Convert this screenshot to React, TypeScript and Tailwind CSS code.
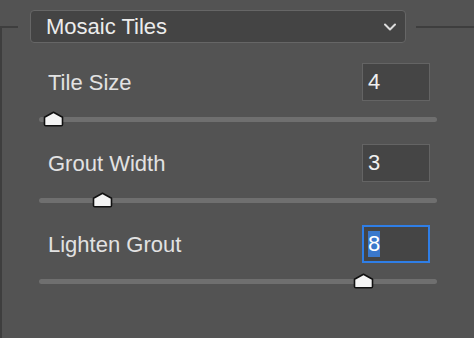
import React from 'react';

type Row = {
  label: string;
  value: string;
  // thumb centre, px from the track's left edge
  thumb: number;
  focused?: boolean;
};

const rows: Row[] = [
  { label: 'Tile Size', value: '4', thumb: 14.5 },
  { label: 'Grout Width', value: '3', thumb: 63 },
  { label: 'Lighten Grout', value: '8', thumb: 324.5, focused: true },
];

function Thumb({ left }: { left: number }) {
  return (
    <svg
      width="21"
      height="16"
      viewBox="0 0 21 16"
      className="absolute top-[-6px]"
      style={{ left: left - 10.5 }}
    >
      <path
        d="M1.5 6.2 L10.5 1.2 L19.5 6.2 V13.5 Q19.5 14.8 18.2 14.8 H2.8 Q1.5 14.8 1.5 13.5 Z"
        fill="#f4f4f4"
        stroke="#111"
        strokeWidth="1.6"
        strokeLinejoin="round"
      />
    </svg>
  );
}

function SliderRow({ row }: { row: Row }) {
  return (
    <div className="flex flex-col">
      <div className="flex items-center justify-between pl-[46px] pr-[44px]">
        <span className="text-[22px] text-[#e2e2e2]">{row.label}</span>
        {row.focused ? (
          <div className="flex h-[38px] w-[68px] items-center border-2 border-[#2f7ee6] bg-[#454545] pl-[4px]">
            <span className="bg-[#3a78cc] text-[22px] leading-[26px] text-white">
              {row.value}
            </span>
          </div>
        ) : (
          <div className="flex h-[38px] w-[68px] items-center border border-[#646464] bg-[#454545] pl-[5px]">
            <span className="text-[22px] leading-[26px] text-[#f0f0f0]">
              {row.value}
            </span>
          </div>
        )}
      </div>
      <div className="px-[37px] pt-[16px]">
        <div className="relative h-[5px] rounded-full bg-[#6f6f6f]">
          <Thumb left={row.thumb} />
        </div>
      </div>
    </div>
  );
}

export default function App() {
  return (
    <div
      className="h-[338px] w-[474px] overflow-hidden bg-[#535353] pt-[10px]"
      style={{ fontFamily: '"Liberation Sans", Arial, sans-serif' }}
    >
      <fieldset className="h-[400px] border-l-2 border-t-2 border-[#3e3e3e]">
        <legend className="ml-[16px] pl-[12px] pr-[10px]">
          <div className="flex h-[33px] w-[376px] items-center justify-between rounded-[4px] border border-[#666666] bg-[#444444] pl-[15px] pr-[9px]">
            <span className="text-[22px] text-[#ececec]">Mosaic Tiles</span>
            <svg width="12" height="8" viewBox="0 0 12 8">
              <polyline
                points="1,1.5 6,6.5 11,1.5"
                fill="none"
                stroke="#dcdcdc"
                strokeWidth="2"
                strokeLinecap="round"
                strokeLinejoin="round"
              />
            </svg>
          </div>
        </legend>
        <div className="flex flex-col gap-[22px] pt-[20px]">
          {rows.map((r) => (
            <SliderRow key={r.label} row={r} />
          ))}
        </div>
      </fieldset>
    </div>
  );
}
